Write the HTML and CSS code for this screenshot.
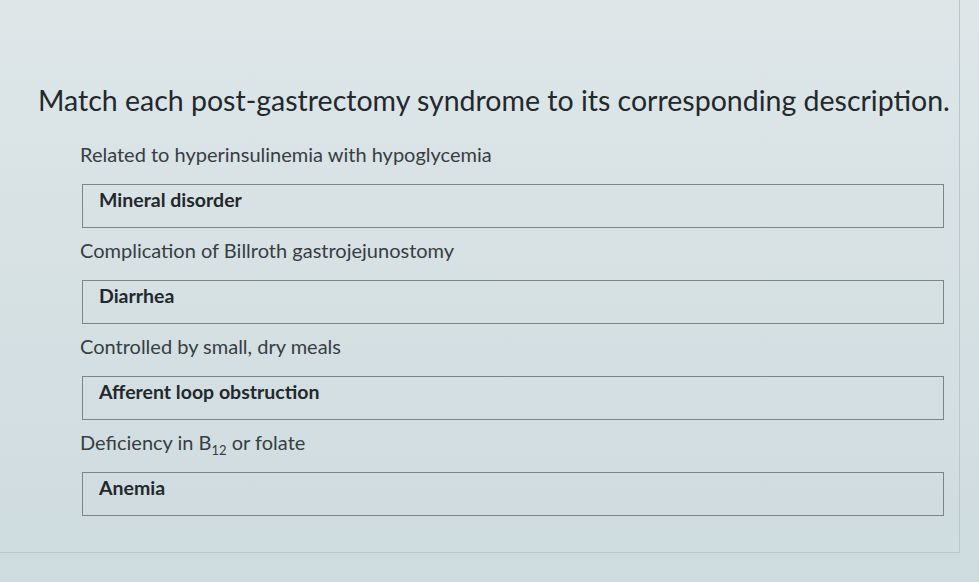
FILE: index.html
```html
<!DOCTYPE html>
<html lang="en">
<head>
<meta charset="utf-8">
<title>Matching question</title>
<link rel="stylesheet" href="styles.css">
</head>
<body>
<main class="card">
  <h1 class="prompt">Match each post-gastrectomy syndrome to its corresponding description.</h1>
  <ol class="pairs">
    <li class="pair">
      <p class="clue">Related to hyperinsulinemia with hypoglycemia</p>
      <div class="answer">Mineral disorder</div>
    </li>
    <li class="pair">
      <p class="clue">Complication of Billroth gastrojejunostomy</p>
      <div class="answer">Diarrhea</div>
    </li>
    <li class="pair">
      <p class="clue">Controlled by small, dry meals</p>
      <div class="answer">Afferent loop obstruction</div>
    </li>
    <li class="pair">
      <p class="clue">Deficiency in B<sub>12</sub> or folate</p>
      <div class="answer">Anemia</div>
    </li>
  </ol>
</main>
</body>
</html>
```

FILE: styles.css
```css
html, body {
  margin: 0;
  padding: 0;
}

body {
  height: 582px;
  overflow: hidden;
  background: linear-gradient(180deg, #dee6e8 0%, #d5e0e3 55%, #cedbdf 100%);
  font-family: Lato, "Open Sans", sans-serif;
  color: #2b3034;
}

.card {
  box-sizing: border-box;
  width: 960px;
  height: 553px;
  border-right: 1px solid #b9c6ca;
  border-bottom: 1px solid #b9c6ca;
  padding: 82px 0 0 38px;
}

.prompt {
  margin: 0;
  font-size: 28.5px;
  font-weight: 400;
  line-height: 36px;
  color: #23282c;
}

.pairs {
  list-style: none;
  margin: 22px 0 0;
  padding: 0 15px 0 42px;
  display: flex;
  flex-direction: column;
}

.pair {
  display: flex;
  flex-direction: column;
}

.clue {
  margin: 8px 0 0;
  font-size: 20px;
  line-height: 28px;
  color: #383d42;
}

.pair:first-child .clue {
  margin-top: 0;
}

.clue sub {
  font-size: 13px;
  line-height: 0;
}

.answer {
  margin: 16px 0 0 2px;
  height: 44px;
  box-sizing: border-box;
  border: 1px solid #7d8487;
  padding: 3px 16px 0;
  font-size: 19.5px;
  line-height: 24px;
  font-weight: 700;
  color: #23282c;
}
```
